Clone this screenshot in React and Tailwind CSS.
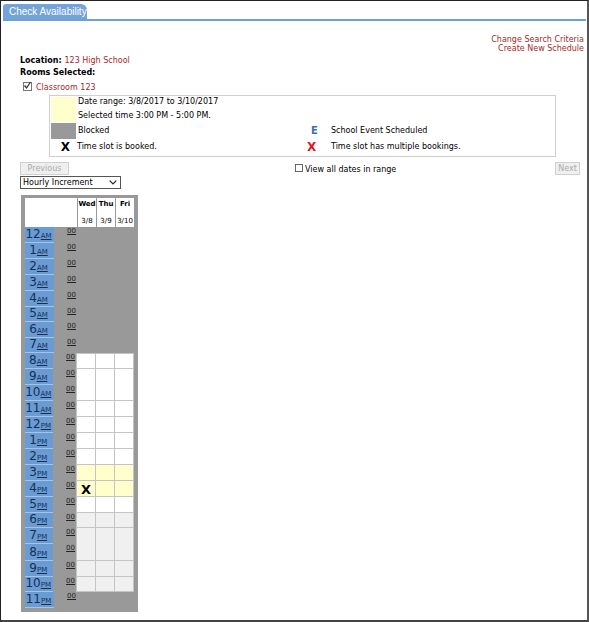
import React from "react";

const F = { fontFamily: '"DejaVu Sans", Verdana, sans-serif' };
const T = { fontFamily: '"Liberation Sans", Arial, sans-serif' };

const hours = [
  ["12", "AM"], ["1", "AM"], ["2", "AM"], ["3", "AM"], ["4", "AM"], ["5", "AM"], ["6", "AM"], ["7", "AM"],
  ["8", "AM"], ["9", "AM"], ["10", "AM"], ["11", "AM"], ["12", "PM"], ["1", "PM"], ["2", "PM"], ["3", "PM"],
  ["4", "PM"], ["5", "PM"], ["6", "PM"], ["7", "PM"], ["8", "PM"], ["9", "PM"], ["10", "PM"], ["11", "PM"],
];

// kind: b = blocked, w = white, y = yellow (selected), g = light gray
const rows = [
  { k: "b", h: "h-4" }, { k: "b", h: "h-4" }, { k: "b", h: "h-4" }, { k: "b", h: "h-4" },
  { k: "b", h: "h-4" }, { k: "b", h: "h-[15px]" }, { k: "b", h: "h-4" }, { k: "b", h: "h-[15px]" },
  { k: "w", h: "h-4" }, { k: "w", h: "h-4", merge: true }, { k: "w", h: "h-4" }, { k: "w", h: "h-4" },
  { k: "w", h: "h-4" }, { k: "w", h: "h-4" }, { k: "w", h: "h-4" }, { k: "y", h: "h-4" },
  { k: "y", h: "h-4", x: true }, { k: "w", h: "h-4" }, { k: "g", h: "h-[15px]" }, { k: "g", h: "h-4", merge: true },
  { k: "g", h: "h-[17px]" }, { k: "g", h: "h-4" }, { k: "g", h: "h-[15px]" }, { k: "b", h: "h-4" },
];

const cellBg = { w: "bg-white", y: "bg-[#ffffcc]", g: "bg-[#f0f0f0]", b: "bg-[#999999]" };

function DayCell({ row, idx }) {
  if (row.k === "b") return <div className="w-[19px] h-full" />;
  const border = row.merge ? "" : "border-b border-b-[#c4c4c4]";
  return (
    <div className={`w-[19px] h-full border-r border-r-[#c4c4c4] ${border} ${cellBg[row.k]} flex items-center justify-center`}>
      {row.x && idx === 0 ? (
        <span className="text-[13px] font-bold text-black leading-none mt-[2px]" style={F}>X</span>
      ) : null}
    </div>
  );
}

export default function App() {
  return (
    <div className="w-[589px] h-[622px] bg-white border-l border-t border-[#222] border-r-2 border-b-2 border-r-[#555] border-b-[#444] text-black" style={F}>
      {/* Tab bar */}
      <div className="pt-[3px] pl-[2px] pr-[1px]">
        <div className="border-b-2 border-[#6e9fd8] flex">
          <div className="h-[15px] w-[84px] bg-[#74a3da] rounded-tl-[3px] rounded-tr-[6px] text-white text-[10px] leading-[15px] pl-[6px] whitespace-nowrap" style={T}>
            Check Availability
          </div>
        </div>
      </div>

      <div className="pl-[19px] pr-[3px]">
        {/* right links */}
        <div className="flex flex-col items-end mt-[14px] text-[#a22a2a] text-[8px] leading-[9px]">
          <span>Change Search Criteria</span>
          <span>Create New Schedule</span>
        </div>

        <div className="mt-[2px] text-[8px] leading-[12px]">
          <div>
            <span className="font-bold">Location: </span>
            <span className="text-[#a22a2a]">123 High School</span>
          </div>
          <div className="font-bold">Rooms Selected:</div>
        </div>

        <div className="flex items-end mt-[1px] pl-[3px] h-[13px]">
          <div className="w-[9px] h-[9px] border border-[#777] bg-white relative mb-[2px]">
            <svg viewBox="0 0 9 9" className="absolute -left-px -top-[2px] w-[9px] h-[9px]">
              <path d="M1.5 4.5 L3.5 7 L7.5 1" stroke="#333" strokeWidth="1.3" fill="none" />
            </svg>
          </div>
          <span className="ml-[4px] text-[#a22a2a] text-[8px] leading-[10px]">Classroom 123</span>
        </div>

        {/* Legend */}
        <div className="ml-[29px] mt-[2px] w-[507px] border border-[#cfcfcf] p-px text-[8px]">
          <div className="grid grid-cols-[25px_230px_23px_1fr]">
            <div className="row-span-2 bg-[#ffffcc]" />
            <div className="pl-[2px] h-[12px] leading-[9px]">Date range: 3/8/2017 to 3/10/2017</div>
            <div />
            <div />
            <div className="pl-[2px] h-[13px] leading-[13px]">Selected time 3:00 PM - 5:00 PM.</div>
            <div />
            <div />
            <div className="bg-[#999999] h-[16px] mt-[1px]" />
            <div className="pl-[2px] leading-[17px]">Blocked</div>
            <div className="text-[#3d6fae] font-bold text-[10px] leading-[17px] pl-[5px]">E</div>
            <div className="leading-[17px] pl-[2px]">School Event Scheduled</div>
            <div className="flex items-center justify-center font-bold text-[12px] h-[16px] pl-[4px]">X</div>
            <div className="pl-[1px] leading-[16px]">Time slot is booked.</div>
            <div className="text-[#e0141e] font-bold text-[12px] leading-[16px] pl-[1px]">X</div>
            <div className="leading-[16px] pl-[2px]">Time slot has multiple bookings.</div>
          </div>
        </div>

        {/* Controls */}
        <div className="flex items-start mt-[5px] pr-[4px]">
          <div className="w-[49px] h-[13px] bg-[#efefef] border border-[#d0d0d0] text-[#aaaaaa] text-[8px] leading-[11px] text-center">
            Previous
          </div>
          <div className="flex items-end ml-[226px] h-[13px]">
            <div className="w-[8px] h-[8px] border border-[#666] bg-white mb-[3px]" />
            <span className="ml-[2px] text-[8px] leading-[10px]">View all dates in range</span>
          </div>
          <div className="flex-1" />
          <div className="w-[25px] h-[13px] bg-[#efefef] border border-[#d0d0d0] text-[#aaaaaa] text-[8px] leading-[11px] text-center">
            Next
          </div>
        </div>
        <div className="mt-px w-[101px] h-[13px] border border-[#555] bg-white flex items-center justify-between pl-[2px] pr-[3px] text-[8px]">
          <span>Hourly Increment</span>
          <svg viewBox="0 0 8 5" className="w-[8px] h-[5px]">
            <path d="M0.7 0.7 L4 4 L7.3 0.7" stroke="#222" strokeWidth="1.2" fill="none" />
          </svg>
        </div>

        {/* Calendar grid */}
        <div className="mt-[6px] w-[117px] bg-[#999999] pt-[3px] pl-[4px] pr-[4px] pb-[4px] ml-px">
          {/* header */}
          <div className="flex h-[29px] gap-px">
            <div className="w-[52px] bg-white" />
            {[["Wed", "3/8"], ["Thu", "3/9"], ["Fri", "3/10"]].map(([d, dt]) => (
              <div key={d} className="w-[18px] bg-white flex flex-col justify-between items-center text-[7px] pt-[2px] pb-[1px]">
                <span className="font-bold leading-[9px]">{d}</span>
                <span className="leading-[9px]">{dt}</span>
              </div>
            ))}
          </div>
          {/* body */}
          <div className="flex flex-col">
            {rows.map((row, i) => (
              <div key={i} className={`flex ${row.h}`}>
                <div className="w-[29px] h-full">
                  <div className="h-full bg-[#6b9bd3] border-b border-b-[#a8c2e2] flex items-end justify-center pb-[1px] pr-[2px] text-[#152f57]">
                    <span className="text-[12px] leading-[13px]">{hours[i][0]}</span>
                    <span className="text-[7px] leading-[9px] underline">{hours[i][1]}</span>
                  </div>
                </div>
                <div className="w-[23px] h-full flex items-start justify-end pr-[1px]">
                  <span className="text-[7px] leading-[9px] underline text-[#222]">00</span>
                </div>
                <div className={`flex h-full ${row.k !== "b" && (i === 8) ? "border-t border-t-[#c4c4c4]" : ""} ${row.k !== "b" ? "border-l border-l-[#c4c4c4]" : ""}`}>
                  {[0, 1, 2].map((c) => (
                    <DayCell key={c} row={row} idx={c} />
                  ))}
                </div>
              </div>
            ))}
          </div>
        </div>
      </div>
    </div>
  );
}
